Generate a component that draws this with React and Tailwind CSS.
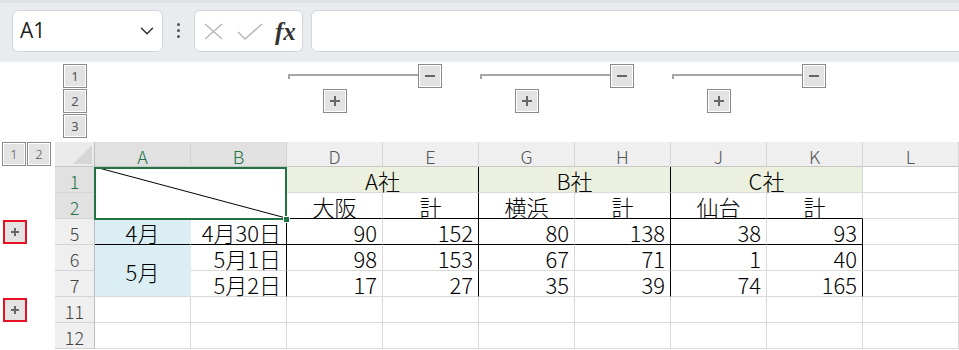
import React from 'react';
import { ChevronDown } from 'lucide-react';

const GRID = 'grid grid-cols-[55px_40px_repeat(9,96px)]';

function PlusGlyph({ size = 10, stroke = 2 }) {
  return (
    <svg width={size} height={size} viewBox={`0 0 ${size} ${size}`}>
      <rect x={(size - stroke) / 2} y="0" width={stroke} height={size} fill="#666" />
      <rect x="0" y={(size - stroke) / 2} width={size} height={stroke} fill="#666" />
    </svg>
  );
}

function OutlineButton({ children }) {
  return (
    <div className="flex h-[24px] w-[24px] items-center justify-center border border-[#8a8a8a] bg-[#e3e3e3] shadow-[inset_0_0_0_1px_#ffffff] font-['Noto_Sans',sans-serif] text-[13px] leading-none text-[#555]">
      {children}
    </div>
  );
}

function RedPlus() {
  return (
    <div className="ml-[3px] flex h-[24px] w-[24px] items-center justify-center border-2 border-[#e81123] bg-[#e3e3e3]">
      <PlusGlyph size={8} stroke={2} />
    </div>
  );
}

function RowHead({ children, selected }) {
  return (
    <div
      className={`flex items-center justify-center border-b border-r border-b-[#d4d4d4] border-r-[#bdbdbd] pt-[3px] text-[18px] font-light leading-[20px] ${
        selected ? 'bg-[#e1e1e1] text-[#217346]' : 'bg-[#efefef] text-[#444]'
      }`}
    >
      {children}
    </div>
  );
}

function ColHead({ children, selected }) {
  return (
    <div
      className={`flex items-center justify-center border-b border-r border-b-[#c6c6c6] border-r-[#d4d4d4] pt-[3px] text-[18px] font-light leading-[20px] ${
        selected ? 'bg-[#e1e1e1] text-[#217346]' : 'bg-[#efefef] text-[#555]'
      }`}
    >
      {children}
    </div>
  );
}

function Cell({ children, align = 'end', rb, bb, className = '' }) {
  const r = rb ? 'border-r-black' : 'border-r-[#dadada]';
  const b = bb ? 'border-b-black' : 'border-b-[#dadada]';
  const j =
    align === 'center' ? 'justify-center' : align === 'start' ? 'justify-start pl-[4px]' : 'justify-end pr-[5px]';
  return (
    <div className={`flex items-center whitespace-nowrap border-b border-r ${r} ${b} ${j} ${className}`}>
      {children}
    </div>
  );
}

const groups = [
  { col: 'col-start-5' },
  { col: 'col-start-7' },
  { col: 'col-start-9' },
];

const body = [
  { n: '6', b: '5月1日', v: ['98', '153', '67', '71', '1', '40'] },
  { n: '7', b: '5月2日', v: ['17', '27', '35', '39', '74', '165'] },
];

export default function App() {
  return (
    <div className="h-[350px] w-[959px] overflow-hidden bg-white">
      {/* formula bar */}
      <div className="flex h-[62px] items-start border-t-[3px] border-t-[#dde1e5] bg-[#e9ecef] pl-[12px] pt-[7px]">
        <div className="flex h-[42px] w-[151px] items-center justify-between rounded-[6px] border border-[#d2d6da] bg-white pl-[7px] pr-[4px]">
          <span className="font-['Open_Sans',sans-serif] text-[21px] text-[#1f1f1f]">A1</span>
          <ChevronDown size={22} strokeWidth={1.6} color="#333" />
        </div>
        <div className="ml-[14px] mt-[13px] flex flex-col gap-[3px]">
          <span className="h-[3px] w-[3px] rounded-full bg-[#555]" />
          <span className="h-[3px] w-[3px] rounded-full bg-[#555]" />
          <span className="h-[3px] w-[3px] rounded-full bg-[#555]" />
        </div>
        <div className="ml-[14px] flex h-[42px] w-[109px] items-center rounded-[6px] border border-[#d2d6da] bg-white pl-[9px]">
          <svg width="19" height="17" viewBox="0 0 19 17">
            <path d="M1 1 L18 16 M18 1 L1 16" stroke="#b5b5b5" strokeWidth="1.4" fill="none" />
          </svg>
          <svg className="ml-[14px]" width="26" height="17" viewBox="0 0 26 17">
            <path d="M1 9 L8 16 L25 1" stroke="#b5b5b5" strokeWidth="1.4" fill="none" />
          </svg>
          <span className="ml-[12px] font-['Liberation_Serif',serif] text-[25px] font-bold italic leading-none text-[#333]">
            fx
          </span>
        </div>
        <div className="ml-[8px] mr-[-8px] h-[42px] flex-1 rounded-[6px] border border-[#d2d6da] bg-white" />
      </div>

      {/* outline controls */}
      <div className={`${GRID} h-[80px] grid-rows-[25px_25px_25px] pt-[2px]`}>
        <div className="col-start-2 row-start-1 flex justify-center">
          <OutlineButton>1</OutlineButton>
        </div>
        <div className="col-start-2 row-start-2 flex justify-center">
          <OutlineButton>2</OutlineButton>
        </div>
        <div className="col-start-2 row-start-3 flex justify-center">
          <OutlineButton>3</OutlineButton>
        </div>
        {groups.map((g) => (
          <React.Fragment key={g.col}>
            <div className={`${g.col} col-span-2 row-start-1 flex items-start pl-[1px] pr-[37px]`}>
              <div className="mt-[10px] h-[5px] flex-1 border-l-2 border-t-2 border-[#a6a6a6]" />
              <OutlineButton>
                <svg width="10" height="2" viewBox="0 0 10 2">
                  <rect width="10" height="2" fill="#666" />
                </svg>
              </OutlineButton>
            </div>
            <div className={`${g.col} row-start-2 flex justify-center`}>
              <OutlineButton>
                <PlusGlyph size={10} stroke={2} />
              </OutlineButton>
            </div>
          </React.Fragment>
        ))}
      </div>

      {/* sheet */}
      <div
        className={`${GRID} relative grid-rows-[25px_repeat(7,26px)] font-['Noto_Sans_CJK_JP',sans-serif] text-[22px] font-light leading-[24px] text-black`}
      >
        {/* header row */}
        <div className="flex gap-[1px] pl-[2px]">
          <OutlineButton>1</OutlineButton>
          <OutlineButton>2</OutlineButton>
        </div>
        <div className="flex items-end justify-end border-b border-r border-b-[#c6c6c6] border-r-[#bdbdbd] bg-[#ebebeb] pb-[2px] pr-[2px]">
          <svg width="19" height="19" viewBox="0 0 19 19">
            <polygon points="19,0 19,19 0,19" fill="#d6d6d6" />
          </svg>
        </div>
        {['A', 'B', 'D', 'E', 'G', 'H', 'J', 'K', 'L'].map((c) => (
          <ColHead key={c} selected={c === 'A' || c === 'B'}>
            {c}
          </ColHead>
        ))}

        {/* row 1 */}
        <div />
        <RowHead selected>1</RowHead>
        <div className="relative col-span-2 row-span-2 border-b border-r border-b-black border-r-black">
          <svg className="absolute inset-0 h-full w-full" preserveAspectRatio="none" viewBox="0 0 100 100">
            <line x1="2" y1="2" x2="99" y2="99" stroke="#000" strokeWidth="1" vectorEffect="non-scaling-stroke" />
          </svg>
        </div>
        <Cell align="center" rb className="col-span-2 bg-[#ebf1de]">A社</Cell>
        <Cell align="center" rb className="col-span-2 bg-[#ebf1de]">B社</Cell>
        <Cell align="center" className="col-span-2 bg-[#ebf1de]">C社</Cell>
        <Cell />

        {/* row 2 */}
        <div />
        <RowHead selected>2</RowHead>
        <Cell align="center" bb>大阪</Cell>
        <Cell align="center" bb rb>計</Cell>
        <Cell align="center" bb>横浜</Cell>
        <Cell align="center" bb rb>計</Cell>
        <Cell align="center" bb>仙台</Cell>
        <Cell align="center" bb>計</Cell>
        <Cell />

        {/* row 5 */}
        <div className="flex items-center">
          <RedPlus />
        </div>
        <RowHead>5</RowHead>
        <Cell align="center" bb className="border-r-[#daeef3] bg-[#daeef3]">4月</Cell>
        <Cell bb rb>4月30日</Cell>
        <Cell bb>90</Cell>
        <Cell bb rb>152</Cell>
        <Cell bb>80</Cell>
        <Cell bb rb>138</Cell>
        <Cell bb>38</Cell>
        <Cell bb rb>93</Cell>
        <Cell />

        {/* rows 6-7 */}
        {body.map((row, i) => (
          <React.Fragment key={row.n}>
            <div />
            <RowHead>{row.n}</RowHead>
            {i === 0 && (
              <div className="row-span-2 flex items-center justify-center border-b border-r border-b-[#dadada] border-r-[#daeef3] bg-[#daeef3]">
                5月
              </div>
            )}
            <Cell rb>{row.b}</Cell>
            {row.v.map((v, k) => (
              <Cell key={k} rb={k % 2 === 1}>
                {v}
              </Cell>
            ))}
            <Cell />
          </React.Fragment>
        ))}

        {/* rows 11-12 */}
        <div className="flex items-center">
          <RedPlus />
        </div>
        <RowHead>11</RowHead>
        {Array.from({ length: 9 }).map((_, k) => (
          <Cell key={`a${k}`} />
        ))}
        <div />
        <RowHead>12</RowHead>
        {Array.from({ length: 9 }).map((_, k) => (
          <Cell key={`b${k}`} />
        ))}

        {/* selection A1:B2 */}
        <div className="pointer-events-none absolute left-[94px] top-[25px] h-[53px] w-[193px] border-2 border-[#217346]">
          <div className="absolute bottom-[-5px] right-[-5px] h-[7px] w-[7px] border border-white bg-[#217346]" />
        </div>
      </div>
    </div>
  );
}
